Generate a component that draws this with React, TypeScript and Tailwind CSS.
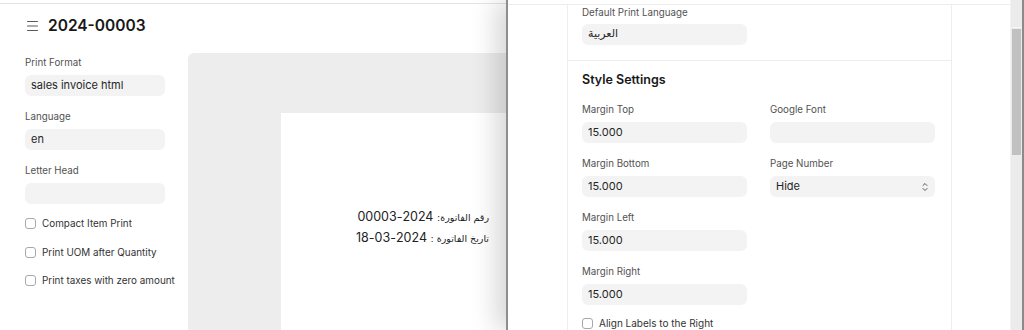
import React from "react";

function Field({ label, value, select, rtl }: { label: string; value?: string; select?: boolean; rtl?: boolean }) {
  return (
    <div className="mb-[14px]">
      <div className="text-[9.75px] leading-[14px] text-[#525252] mb-[5px] whitespace-nowrap">{label}</div>
      <div className="h-[21px] rounded-[6px] bg-[#f3f3f3] flex items-center justify-between px-[6px] text-[11px] text-[#262626]">
        <span dir={rtl ? "rtl" : undefined} className="font-['Inter','DejaVu_Sans',sans-serif]">{value}</span>
        {select && (
          <svg width="8" height="12" viewBox="0 0 8 12" fill="none" stroke="#555" strokeWidth="1" strokeLinecap="round" strokeLinejoin="round">
            <path d="M2 4.5 L4 2.5 L6 4.5" />
            <path d="M2 7.5 L4 9.5 L6 7.5" />
          </svg>
        )}
      </div>
    </div>
  );
}

function Check({ label }: { label: string }) {
  return (
    <div className="flex items-center gap-[6px] h-[28.5px] whitespace-nowrap">
      <div className="w-[11px] h-[11px] rounded-[3px] border border-[#a8a8a8] bg-white shrink-0" />
      <span className="text-[9.9px] text-[#333]">{label}</span>
    </div>
  );
}

export default function App() {
  return (
    <div className="flex h-[330px] w-[1024px] overflow-hidden bg-white font-['Inter',sans-serif]">
      {/* Left page */}
      <div className="w-[506px] shrink-0 flex flex-col overflow-hidden">
        <div className="h-[4px] shrink-0 border-b border-[#e4e4e4]" />
        <div className="flex items-center h-[44px] shrink-0 pl-[27px] gap-[10px]">
          <svg width="11" height="12" viewBox="0 0 11 12" fill="none" stroke="#5a5a5a" strokeWidth="1.2" strokeLinecap="round">
            <path d="M0.6 1.5 H10.4" />
            <path d="M0.6 6 H10.4" />
            <path d="M0.6 10.5 H10.4" />
          </svg>
          <h1 className="text-[15.5px] font-semibold text-[#171717] leading-none">2024-00003</h1>
        </div>
        <div className="flex flex-1 min-h-0">
          <div className="w-[140px] ml-[25px] pt-[7.5px] shrink-0">
            <Field label="Print Format" value="sales invoice html" />
            <Field label="Language" value="en" />
            <Field label="Letter Head" value="" />
            <div className="-mt-[8px]">
              <Check label="Compact Item Print" />
              <Check label="Print UOM after Quantity" />
              <Check label="Print taxes with zero amount" />
            </div>
          </div>
          <div className="flex-1 ml-[23px] mt-[5px] rounded-tl-[6px] bg-[#ededed] pl-[93px] pt-[60px] flex">
            <div className="flex-1 bg-white pr-[17px] pt-[94px]">
              <div dir="rtl" className="text-[12.5px] leading-[20px] text-[#222] font-['Inter','DejaVu_Sans',sans-serif] whitespace-nowrap">
                <div><span className="text-[9.5px] font-['DejaVu_Sans',sans-serif]">رقم الفاتورة:</span> 2024-00003</div>
                <div><span className="text-[9.5px] font-['DejaVu_Sans',sans-serif]">تاريخ الفاتورة :</span> 2024-03-18</div>
              </div>
            </div>
          </div>
        </div>
      </div>

      {/* Right panel */}
      <div className="relative z-10 flex flex-1 border-l-2 border-[#8e8e8e] bg-white shadow-[-10px_0_24px_rgba(0,0,0,0.16)]">
        <div className="flex-1 flex flex-col">
          <div className="h-[5px] shrink-0 border-b border-[#ededed]" />
          <div className="ml-[59px] w-[385px] flex-1 border-x border-[#ededed]">
            <div className="px-[14px] pt-[1px] pb-[15px] border-b border-[#ededed]">
              <div className="w-[165px]">
                <div className="text-[9.75px] leading-[14px] text-[#525252] mb-[4px]">Default Print Language</div>
                <div className="h-[21px] rounded-[6px] bg-[#f3f3f3] flex items-center px-[6px] text-[11px] text-[#262626]">
                  <span dir="rtl" className="font-['DejaVu_Sans',sans-serif]">العربية</span>
                </div>
              </div>
            </div>
            <div className="px-[14px] pt-[10px]">
              <div className="text-[12.5px] leading-[18px] font-semibold text-[#171717] mb-[14px]">Style Settings</div>
              <div className="flex gap-[23px]">
                <div className="w-[165px]">
                  <Field label="Margin Top" value="15.000" />
                  <Field label="Margin Bottom" value="15.000" />
                  <Field label="Margin Left" value="15.000" />
                  <Field label="Margin Right" value="15.000" />
                </div>
                <div className="w-[165px]">
                  <Field label="Google Font" value="" />
                  <Field label="Page Number" value="Hide" select />
                </div>
              </div>
              <div className="flex items-center gap-[6px] h-[14px] -mt-[3px]">
                <div className="w-[11px] h-[11px] rounded-[3px] border border-[#a8a8a8] bg-white shrink-0" />
                <span className="text-[10px] text-[#333]">Align Labels to the Right</span>
              </div>
            </div>
          </div>
        </div>
        {/* scrollbar */}
        <div className="w-[12px] shrink-0 bg-[#ebebeb] border-l border-[#f2f2f2] flex flex-col">
          <div className="h-[28px] border-b border-[#f5f5f5]" />
          <div className="mt-[1px] mx-[1px] h-[126px] bg-[#c1c1c1]" />
        </div>
        <div className="w-[2px] shrink-0 bg-[#8a8a8a]" />
      </div>
    </div>
  );
}
